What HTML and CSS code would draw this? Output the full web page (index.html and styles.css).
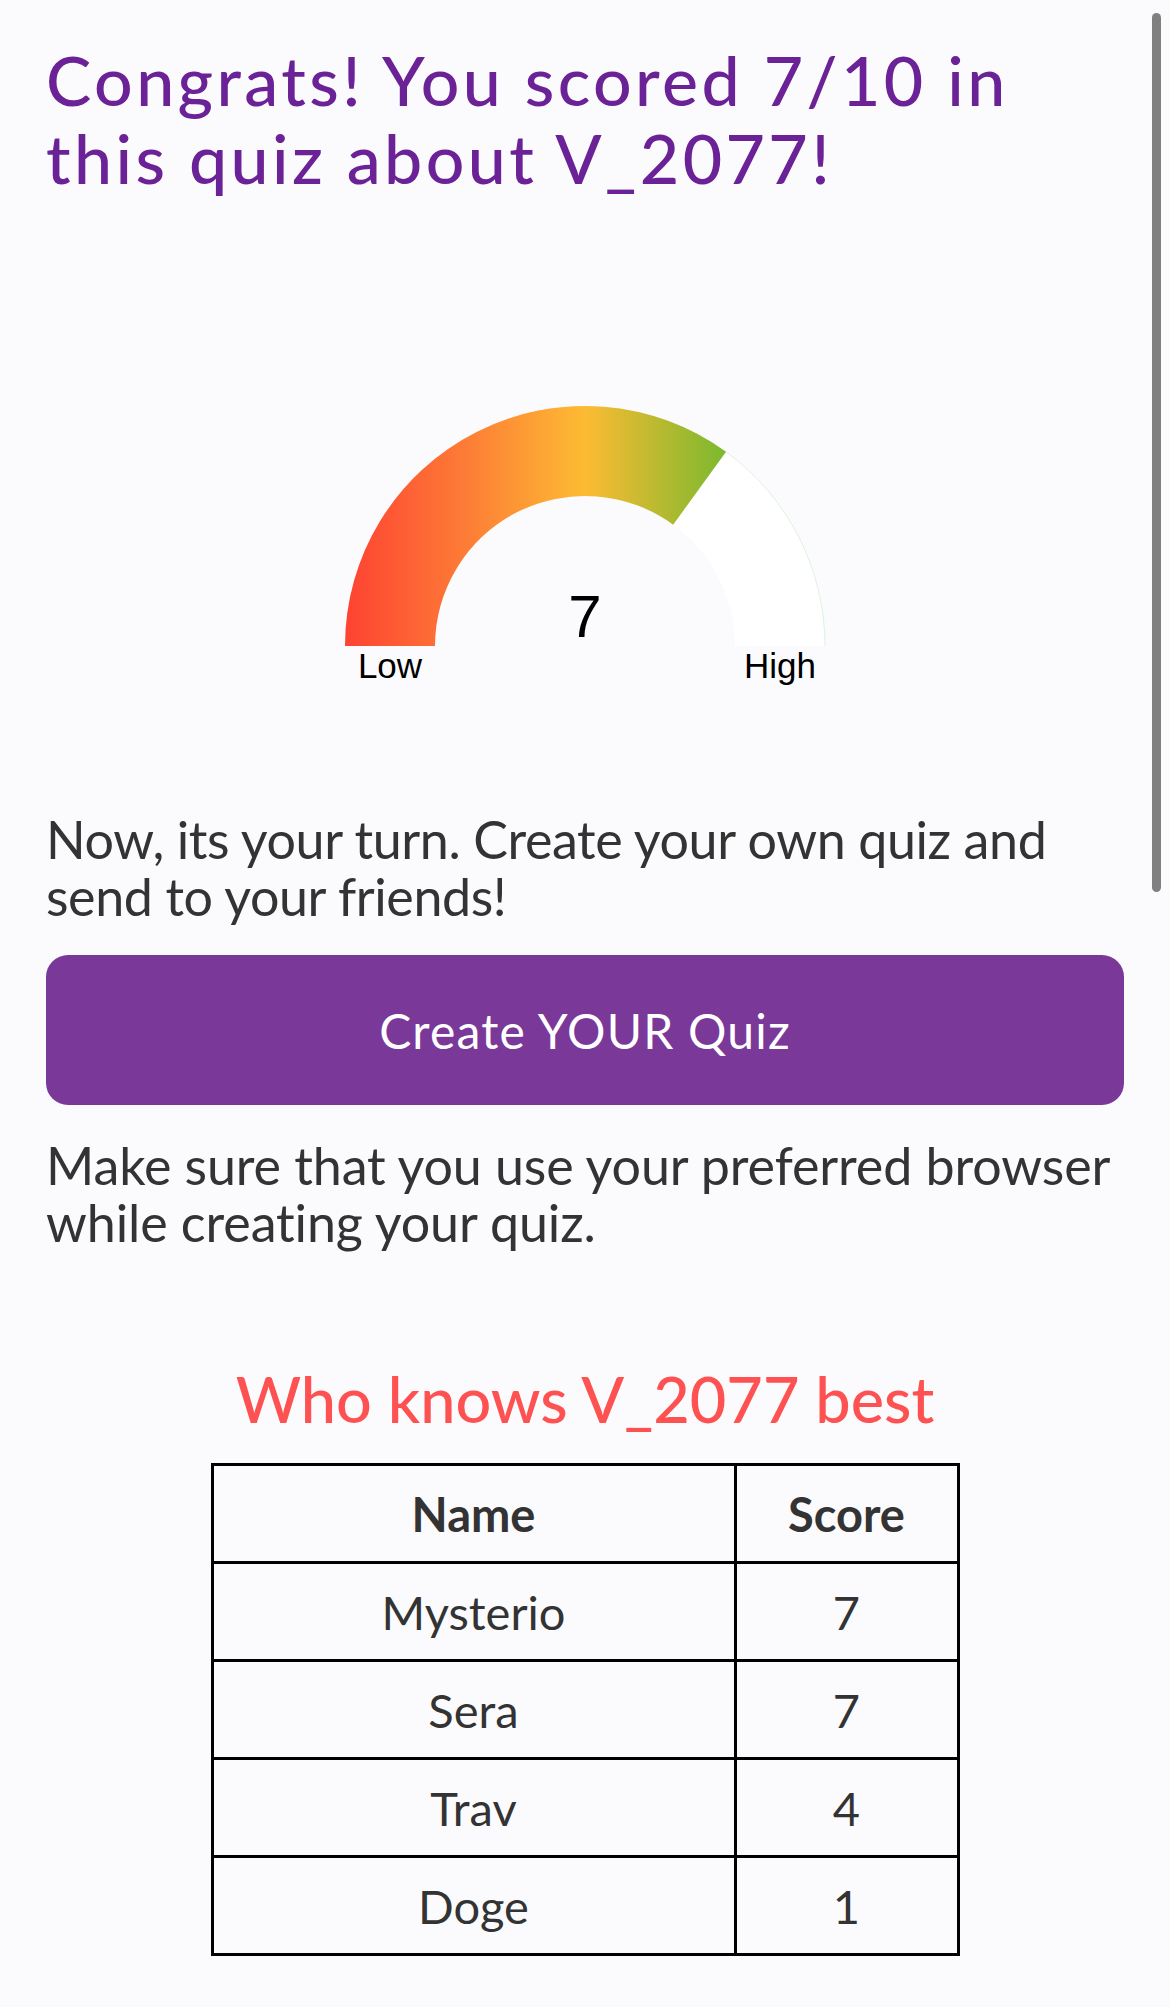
FILE: index.html
```html
<!DOCTYPE html>
<html lang="en">
<head>
<meta charset="utf-8">
<title>Quiz result</title>
<link rel="stylesheet" href="styles.css">
</head>
<body>
<main class="page">
  <h1 class="result-title">Congrats! You scored 7/10 in this quiz about V_2077!</h1>

  <div class="gauge-wrap">
    <svg class="gauge" width="560" height="300" viewBox="0 0 560 300" xmlns="http://www.w3.org/2000/svg">
      <defs>
        <linearGradient id="gaugeGrad" gradientUnits="userSpaceOnUse" x1="40" y1="0" x2="520" y2="0">
          <stop offset="0" stop-color="#fe4232"/>
          <stop offset="0.25" stop-color="#fd7c36"/>
          <stop offset="0.5" stop-color="#fdbb33"/>
          <stop offset="0.79" stop-color="#7cb92e"/>
          <stop offset="1" stop-color="#6fb52b"/>
        </linearGradient>
      </defs>
      <path d="M421.07 55.84 A240 240 0 0 1 520 250 L430 250 A150 150 0 0 0 368.17 128.65 Z" fill="#ffffff"/>
      <path d="M421.07 55.84 A240 240 0 0 1 520 250" fill="none" stroke="#dff1df" stroke-width="1"/>
      <path d="M40 250 A240 240 0 0 1 421.07 55.84 L368.17 128.65 A150 150 0 0 0 130 250 Z" fill="url(#gaugeGrad)"/>
      <text class="gauge-value" x="280" y="241" text-anchor="middle">7</text>
      <text class="gauge-label" x="85" y="282" text-anchor="middle">Low</text>
      <text class="gauge-label" x="475" y="282" text-anchor="middle">High</text>
    </svg>
  </div>

  <p class="lead">Now, its your turn. Create your own quiz and send to your friends!</p>

  <a class="create-btn" href="#">Create YOUR Quiz</a>

  <p class="lead note">Make sure that you use your preferred browser while creating your quiz.</p>

  <h2 class="board-title">Who knows V_2077 best</h2>

  <table class="board">
    <thead>
      <tr><th class="col-name">Name</th><th class="col-score">Score</th></tr>
    </thead>
    <tbody>
      <tr><td>Mysterio</td><td>7</td></tr>
      <tr><td>Sera</td><td>7</td></tr>
      <tr><td>Trav</td><td>4</td></tr>
      <tr><td>Doge</td><td>1</td></tr>
    </tbody>
  </table>
</main>
<div class="scroll-thumb"></div>
</body>
</html>
```

FILE: styles.css
```css
html, body {
  margin: 0;
  padding: 0;
  background: #fbfbfd;
  overflow: hidden;
}

body {
  font-family: Lato, "Open Sans", "Liberation Sans", sans-serif;
  color: #333333;
}

.page {
  padding: 0 46px;
  display: flex;
  flex-direction: column;
}

.result-title {
  margin: 41px 0 0;
  font-size: 68px;
  line-height: 78px;
  font-weight: 500;
  letter-spacing: 3.4px;
  color: #6b2296;
}

.gauge-wrap {
  margin-top: 199px;
  display: flex;
  justify-content: center;
}

.gauge {
  display: block;
}

.gauge-value {
  font-family: "Liberation Sans", Arial, sans-serif;
  font-size: 60px;
  fill: #000000;
}

.gauge-label {
  font-family: "Liberation Sans", Arial, sans-serif;
  font-size: 35px;
  fill: #000000;
}

.lead {
  margin: 115px 0 0;
  font-size: 52px;
  line-height: 57px;
  font-weight: 400;
  letter-spacing: -0.4px;
  color: #333333;
}

.lead.note {
  margin-top: 32px;
  letter-spacing: -0.1px;
}

.create-btn {
  margin-top: 30px;
  height: 150px;
  border-radius: 22px;
  background: #7a3899;
  color: #ffffff;
  text-decoration: none;
  font-size: 48px;
  letter-spacing: 1.2px;
  display: flex;
  align-items: center;
  justify-content: center;
}

.board-title {
  margin: 110px 0 0;
  text-align: center;
  font-size: 63px;
  line-height: 76px;
  font-weight: 500;
  color: #fe5252;
}

.board {
  margin: 26px auto 0;
  width: 749px;
  border-collapse: collapse;
  font-size: 47px;
  color: #333333;
}

.board th,
.board td {
  border: 3px solid #000000;
  height: 95px;
  padding: 0;
  text-align: center;
  vertical-align: middle;
}

.board th {
  font-weight: 700;
}

.col-name {
  width: 520px;
}

.scroll-thumb {
  position: fixed;
  top: 13px;
  right: 9px;
  width: 9px;
  height: 879px;
  border-radius: 5px;
  background: #808080;
}
```
